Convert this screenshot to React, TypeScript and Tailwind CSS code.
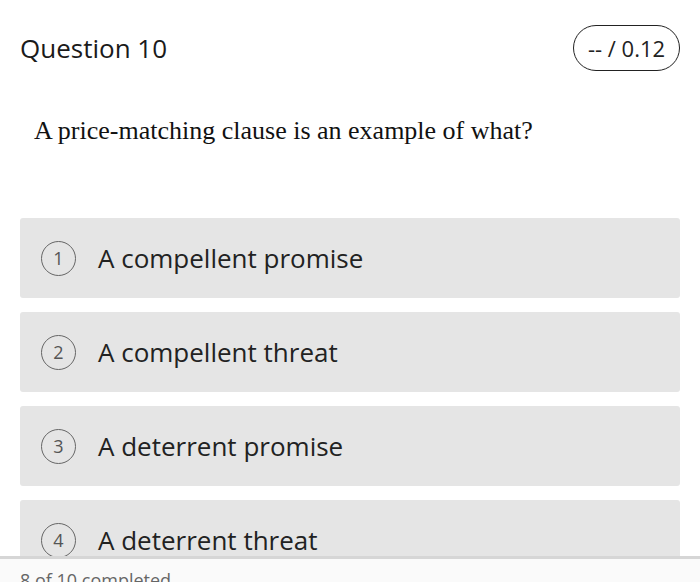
import React from 'react'

const options = [
  'A compellent promise',
  'A compellent threat',
  'A deterrent promise',
  'A deterrent threat',
]

const App = () => {
  return (
    <div className="relative h-[582px] w-[700px] overflow-hidden bg-white font-['Open_Sans',sans-serif] text-[#222]">
      {/* Header */}
      <div className="flex h-[94px] items-center justify-between px-5 pt-[2px]">
        <h1 className="text-[26px] font-medium leading-none text-[#1a1a1a]">Question 10</h1>
        <div className="flex h-[46px] w-[107px] items-center justify-center rounded-full border border-[#222] text-[22px]">
          -- / 0.12
        </div>
      </div>

      {/* Question */}
      <p className="pl-[34px] pt-[20px] font-['Liberation_Serif',serif] text-[26px] leading-[34px] text-[#111]">
        A price-matching clause is an example of what?
      </p>

      {/* Options */}
      <div className="mt-[70px] flex flex-col gap-[14px] px-5">
        {options.map((opt, i) => (
          <div
            key={opt}
            className="flex h-[80px] items-center gap-[22px] rounded-[3px] bg-[#e5e5e5] px-[21px]"
          >
            <span className="flex h-[35px] w-[35px] shrink-0 items-center justify-center rounded-full border-[1.5px] border-[#666] text-[18px] text-[#555]">
              {i + 1}
            </span>
            <span className="text-[26px] text-[#222]">{opt}</span>
          </div>
        ))}
      </div>

      {/* Bottom progress bar */}
      <div className="absolute bottom-0 left-0 right-0 h-[26px] border-t-[3px] border-[#d6d6d6] bg-[#fafafa]">
        <p className="pl-5 pt-[12px] text-[18px] leading-none text-[#666]">8 of 10 completed</p>
      </div>
    </div>
  )
}

export default App
